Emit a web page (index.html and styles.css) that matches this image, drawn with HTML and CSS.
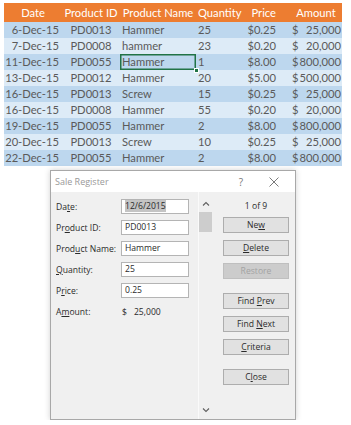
FILE: index.html
```html
<!DOCTYPE html>
<html lang="en">
<head>
    <meta charset="UTF-8">
    <meta name="viewport" content="width=device-width, initial-scale=1.0">
    <title>Sale Register</title>
    <link rel="stylesheet" href="styles.css">
</head>
<body>
    <table class="sheet">
        <colgroup>
            <col class="c-date"><col class="c-id"><col class="c-name"><col class="c-qty"><col class="c-price"><col class="c-amount">
        </colgroup>
        <thead>
            <tr>
                <th>Date</th><th>Product ID</th><th>Product Name</th><th class="th-qty">Quantity</th><th class="th-price">Price</th><th class="th-amount">Amount</th>
            </tr>
        </thead>
        <tbody>
            <tr><td class="date">6-Dec-15</td><td class="id">PD0013</td><td class="name">Hammer</td><td class="qty">25</td><td class="price">$0.25</td><td><div class="amount"><span>$</span><span>25,000</span></div></td></tr>
            <tr><td class="date">7-Dec-15</td><td class="id">PD0008</td><td class="name">hammer</td><td class="qty">23</td><td class="price">$0.20</td><td><div class="amount"><span>$</span><span>20,000</span></div></td></tr>
            <tr><td class="date">11-Dec-15</td><td class="id">PD0055</td><td class="name selected">Hammer<i class="handle"></i></td><td class="qty">1</td><td class="price">$8.00</td><td><div class="amount"><span>$</span><span>800,000</span></div></td></tr>
            <tr><td class="date">13-Dec-15</td><td class="id">PD0012</td><td class="name">Hammer</td><td class="qty">20</td><td class="price">$5.00</td><td><div class="amount"><span>$</span><span>500,000</span></div></td></tr>
            <tr><td class="date">16-Dec-15</td><td class="id">PD0013</td><td class="name">Screw</td><td class="qty">15</td><td class="price">$0.25</td><td><div class="amount"><span>$</span><span>25,000</span></div></td></tr>
            <tr><td class="date">16-Dec-15</td><td class="id">PD0008</td><td class="name">Hammer</td><td class="qty">55</td><td class="price">$0.20</td><td><div class="amount"><span>$</span><span>20,000</span></div></td></tr>
            <tr><td class="date">19-Dec-15</td><td class="id">PD0055</td><td class="name">Hammer</td><td class="qty">2</td><td class="price">$8.00</td><td><div class="amount"><span>$</span><span>800,000</span></div></td></tr>
            <tr><td class="date">20-Dec-15</td><td class="id">PD0013</td><td class="name">Screw</td><td class="qty">10</td><td class="price">$0.25</td><td><div class="amount"><span>$</span><span>25,000</span></div></td></tr>
            <tr><td class="date">22-Dec-15</td><td class="id">PD0055</td><td class="name">Hammer</td><td class="qty">2</td><td class="price">$8.00</td><td><div class="amount"><span>$</span><span>800,000</span></div></td></tr>
        </tbody>
    </table>

    <div class="dialog">
        <div class="dialog-title">
            <span class="title-text">Sale Register</span>
            <span class="title-help">?</span>
            <svg class="title-close" width="10" height="10" viewBox="0 0 10 10">
                <path d="M0.5 0.5 L9.5 9.5 M9.5 0.5 L0.5 9.5" stroke="#7a7a7a" stroke-width="1" fill="none"/>
            </svg>
        </div>
        <div class="dialog-body">
            <div class="form">
                <div class="form-row">
                    <label>Da<u>t</u>e:</label>
                    <div class="field"><span class="selected-text">12/6/2015</span></div>
                </div>
                <div class="form-row">
                    <label>Pr<u>o</u>duct ID:</label>
                    <div class="field">PD0013</div>
                </div>
                <div class="form-row">
                    <label>Prod<u>u</u>ct Name:</label>
                    <div class="field">Hammer</div>
                </div>
                <div class="form-row">
                    <label><u>Q</u>uantity:</label>
                    <div class="field">25</div>
                </div>
                <div class="form-row">
                    <label>P<u>r</u>ice:</label>
                    <div class="field">0.25</div>
                </div>
                <div class="form-row">
                    <label>A<u>m</u>ount:</label>
                    <div class="value"><span>$</span><span>25,000</span></div>
                </div>
            </div>
            <div class="scrollbar">
                <svg width="8" height="6" viewBox="0 0 8 6"><path d="M1 4.5 L4 1.5 L7 4.5" stroke="#606060" stroke-width="1.1" fill="none"/></svg>
                <div class="thumb"></div>
                <div class="track"></div>
                <svg width="8" height="6" viewBox="0 0 8 6"><path d="M1 1.5 L4 4.5 L7 1.5" stroke="#606060" stroke-width="1.1" fill="none"/></svg>
            </div>
            <div class="actions">
                <div class="counter">1 of 9</div>
                <button class="btn">Ne<u>w</u></button>
                <button class="btn"><u>D</u>elete</button>
                <button class="btn disabled"><u>R</u>estore</button>
                <button class="btn group">Find <u>P</u>rev</button>
                <button class="btn">Find <u>N</u>ext</button>
                <button class="btn"><u>C</u>riteria</button>
                <button class="btn group">C<u>l</u>ose</button>
            </div>
        </div>
    </div>
</body>
</html>
```

FILE: styles.css
```css
* {
    margin: 0;
    padding: 0;
    box-sizing: border-box;
}
body {
    background: #fff;
    font-family: "Lato", "Liberation Sans", sans-serif;
    padding: 3px 0 0 4px;
}

/* spreadsheet */
.sheet {
    border-collapse: collapse;
    table-layout: fixed;
    width: 338px;
    font-size: 11.2px;
    color: #5a5a5a;
}
.c-date { width: 58px; }
.c-id { width: 58px; }
.c-name { width: 76px; }
.c-qty { width: 50px; }
.c-price { width: 34px; }
.c-amount { width: 62px; }

.sheet th {
    background: #ed7d31;
    color: #fff;
    font-weight: normal;
    height: 19px;
    padding: 0;
    text-align: center;
    white-space: nowrap;
}
.sheet .th-qty {
    text-align: left;
    padding-left: 2px;
}
.sheet .th-price {
    text-align: right;
    padding-right: 4px;
}
.sheet .th-amount {
    padding-left: 10px;
}
.sheet td {
    height: 16px;
    padding: 0;
    white-space: nowrap;
    line-height: 16px;
}
.sheet tbody tr:nth-child(odd) td {
    background: #bdd7ee;
}
.sheet tbody tr:nth-child(even) td {
    background: #ddebf7;
}
.sheet .date {
    text-align: right;
    padding-right: 3px;
}
.sheet .id {
    text-align: center;
}
.sheet .name,
.sheet .qty {
    padding-left: 2px;
}
.sheet .price {
    text-align: right;
    padding-right: 4px;
}
.amount {
    display: flex;
    justify-content: space-between;
    padding: 0 1px 0 12px;
}
.sheet .selected {
    position: relative;
    box-shadow: inset 0 0 0 1.5px #217346;
}
.handle {
    position: absolute;
    right: -3px;
    bottom: -3px;
    width: 5px;
    height: 5px;
    background: #217346;
    border: 1px solid #fff;
}

/* dialog */
.dialog {
    width: 246px;
    height: 250px;
    margin: 4px 0 0 46px;
    border: 1px solid #a8a8a8;
    background: #f0f0f0;
    box-shadow: 0 0 6px rgba(0, 0, 0, 0.18);
    font-family: "Open Sans", "Liberation Sans", sans-serif;
    font-size: 8.6px;
    color: #2b2b2b;
    display: flex;
    flex-direction: column;
}
.dialog-title {
    height: 21px;
    background: #fff;
    display: flex;
    align-items: center;
    padding-left: 4px;
    flex-shrink: 0;
}
.title-text {
    color: #999;
    font-size: 9px;
    flex: 1;
}
.title-help {
    color: #777;
    font-size: 10px;
    margin-right: 26px;
}
.title-close {
    margin-right: 16px;
}
.dialog-body {
    flex: 1;
    display: grid;
    grid-template-columns: 147px 14px 1fr;
}

.form {
    padding: 7px 0 0 5px;
    display: flex;
    flex-direction: column;
    gap: 6px;
}
.form-row {
    display: flex;
    align-items: center;
    height: 15px;
}
.form-row label {
    width: 65px;
}
.field {
    width: 68px;
    height: 15px;
    background: #fff;
    border: 1px solid #b4b4b4;
    padding-left: 3px;
    line-height: 13px;
}
.selected-text {
    background: #c4c4c4;
}
.value {
    display: flex;
    gap: 7px;
    padding-left: 1px;
}

.scrollbar {
    border-left: 1px solid #fafafa;
    display: flex;
    flex-direction: column;
    align-items: center;
    padding: 9px 0 6px;
}
.scrollbar svg {
    flex-shrink: 0;
}
.thumb {
    width: 13px;
    height: 20px;
    background: #cdcdcd;
    margin-top: 5px;
}
.track {
    flex: 1;
}

.actions {
    display: flex;
    flex-direction: column;
    padding: 8px 0 0 11px;
}
.counter {
    width: 66px;
    text-align: center;
    line-height: 12px;
    margin-bottom: 5px;
}
.btn {
    width: 66px;
    height: 16px;
    margin-bottom: 7px;
    background: #e1e1e1;
    border: 1px solid #adadad;
    font-family: inherit;
    font-size: 8.6px;
    line-height: 14px;
    color: #2b2b2b;
}
.btn.group {
    margin-top: 7px;
}
.btn.disabled {
    background: #cccccc;
    border-color: #bfbfbf;
    color: #a3a3a3;
}
.btn.disabled u {
    text-decoration: none;
}
```
